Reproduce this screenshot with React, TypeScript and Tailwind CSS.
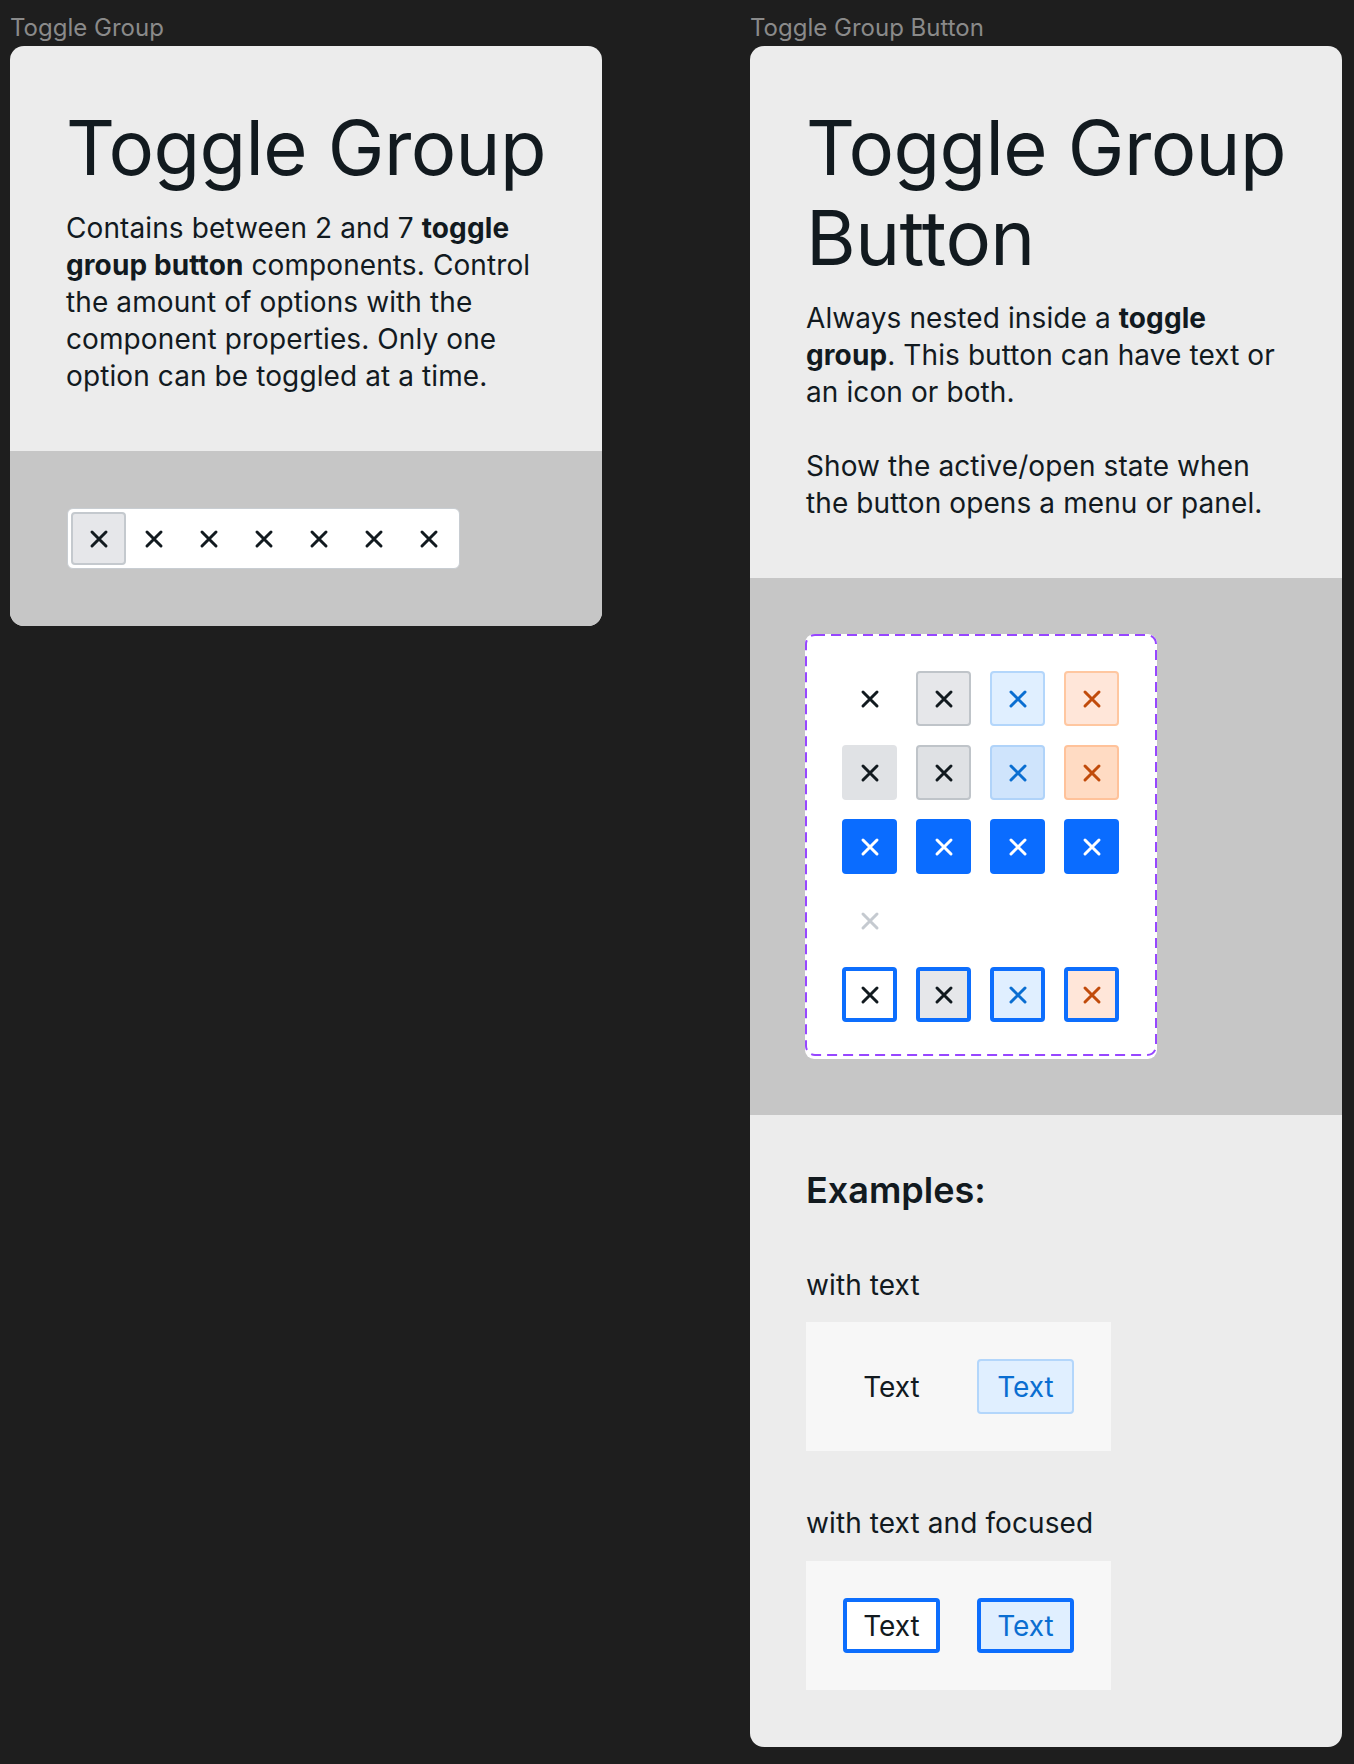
const font = { fontFamily: 'Inter, "Noto Sans", sans-serif' }

type Variant = {
  box: string
  icon: string
}

function XIcon({ className }: { className: string }) {
  return (
    <svg viewBox="0 0 20 20" className={`w-[20px] h-[20px] ${className}`} fill="none">
      <path d="M3 3 17 17M17 3 3 17" stroke="currentColor" strokeWidth="3" strokeLinecap="round" />
    </svg>
  )
}

function Tile({ v }: { v: Variant }) {
  return (
    <div className={`w-[55px] h-[55px] flex items-center justify-center rounded-[4px] ${v.box}`}>
      <XIcon className={v.icon} />
    </div>
  )
}

const rows: Variant[][] = [
  [
    { box: 'bg-white', icon: 'text-[#121a1f]' },
    { box: 'bg-[#e6e7ea] border-2 border-[#bfc4c9]', icon: 'text-[#121a1f]' },
    { box: 'bg-[#e0efff] border-2 border-[#b3d6fb]', icon: 'text-[#0a6ed1]' },
    { box: 'bg-[#ffe6d9] border-2 border-[#ffc7a0]', icon: 'text-[#c14b0b]' },
  ],
  [
    { box: 'bg-[#e0e2e5]', icon: 'text-[#121a1f]' },
    { box: 'bg-[#dfe1e4] border-2 border-[#bfc4c9]', icon: 'text-[#121a1f]' },
    { box: 'bg-[#cfe4fc] border-2 border-[#b0d3f9]', icon: 'text-[#0a6ed1]' },
    { box: 'bg-[#ffdbc3] border-2 border-[#ffc29a]', icon: 'text-[#c14b0b]' },
  ],
  [
    { box: 'bg-[#0a6cff]', icon: 'text-white' },
    { box: 'bg-[#0a6cff]', icon: 'text-white' },
    { box: 'bg-[#0a6cff]', icon: 'text-white' },
    { box: 'bg-[#0a6cff]', icon: 'text-white' },
  ],
  [{ box: 'bg-white', icon: 'text-[#c5cad0]' }],
  [
    { box: 'bg-white border-4 border-[#0d6efd]', icon: 'text-[#121a1f]' },
    { box: 'bg-[#e6e7ea] border-4 border-[#0d6efd]', icon: 'text-[#121a1f]' },
    { box: 'bg-[#e0efff] border-4 border-[#0d6efd]', icon: 'text-[#0a6ed1]' },
    { box: 'bg-[#ffe6d9] border-4 border-[#0d6efd]', icon: 'text-[#c14b0b]' },
  ],
]

function TextButton({ box, text }: { box: string; text: string }) {
  return (
    <div className={`w-[97px] h-[55px] flex items-center justify-center rounded-[4px] text-[28px] ${box}`}>
      {text}
    </div>
  )
}

export default function App() {
  return (
    <div style={font} className="min-h-[1764px] bg-[#1e1e1e] text-[#121a1f] flex gap-[148px] px-[10px] pt-[13px]">
      {/* Toggle Group */}
      <div className="w-[592px] flex flex-col">
        <div className="text-[24px] leading-[30px] text-[#8a8a8a] h-[33px]">Toggle Group</div>
        <div className="rounded-[14px] overflow-hidden bg-[#ececec]">
          <div className="p-[56px]">
            <h1 className="text-[76px] leading-[90px] tracking-[-0.6px] whitespace-nowrap">Toggle Group</h1>
            <p className="mt-[18px] text-[28px] leading-[37px] tracking-[0.1px]">
              Contains between 2 and 7 <b>toggle group button</b> components. Control the amount of options with the
              component properties. Only one option can be toggled at a time.
            </p>
          </div>
          <div className="bg-[#c6c6c6] px-[57px] py-[57px]">
            <div className="inline-flex bg-white border border-[#c8cdd2] rounded-[6px] p-[3px]">
              {Array.from({ length: 7 }).map((_, i) => (
                <div
                  key={i}
                  className={`w-[55px] h-[53px] flex items-center justify-center rounded-[4px] ${
                    i === 0 ? 'bg-[#e6e7ea] border-2 border-[#c4c9ce]' : ''
                  }`}
                >
                  <XIcon className="text-[#121a1f]" />
                </div>
              ))}
            </div>
          </div>
        </div>
      </div>

      {/* Toggle Group Button */}
      <div className="w-[592px] flex flex-col">
        <div className="text-[24px] leading-[30px] text-[#8a8a8a] h-[33px]">Toggle Group Button</div>
        <div className="rounded-[14px] overflow-hidden bg-[#ececec]">
          <div className="p-[56px]">
            <h1 className="text-[76px] leading-[90px] tracking-[-0.6px]">Toggle Group Button</h1>
            <p className="mt-[18px] text-[28px] leading-[37px] tracking-[0.1px]">
              Always nested inside a <b>toggle group</b>. This button can have text or an icon or both.
            </p>
            <p className="mt-[37px] text-[28px] leading-[37px] tracking-[0.1px]">
              Show the active/open state when the button opens a menu or panel.
            </p>
          </div>
          <div className="bg-[#c6c6c6] px-[55px] py-[56px]">
            <div className="relative w-[352px] bg-white rounded-[9px] p-[37px] flex flex-col gap-[19px]">
              <svg className="absolute inset-0 w-full h-full pointer-events-none" fill="none">
                <rect
                  x="1"
                  y="1"
                  width="350"
                  height="420"
                  rx="9"
                  stroke="#9747ff"
                  strokeWidth="2"
                  strokeDasharray="10 6"
                />
              </svg>
              {rows.map((row, r) => (
                <div key={r} className="flex gap-[19px]">
                  {row.map((v, c) => (
                    <Tile key={c} v={v} />
                  ))}
                </div>
              ))}
            </div>
          </div>
          <div className="px-[56px] pt-[51px] pb-[57px]">
            <h2 className="text-[36px] leading-[48px] font-semibold">Examples:</h2>
            <div className="mt-[53px] text-[28px] leading-[37px] tracking-[0.1px]">with text</div>
            <div className="mt-[18px] w-[305px] bg-[#f7f7f7] p-[37px] flex gap-[37px]">
              <TextButton box="bg-[#f7f7f7]" text="Text" />
              <TextButton box="bg-[#e0efff] border-2 border-[#b3d6fb] text-[#0a6ed1]" text="Text" />
            </div>
            <div className="mt-[54px] text-[28px] leading-[37px] tracking-[0.1px]">with text and focused</div>
            <div className="mt-[19px] w-[305px] bg-[#f7f7f7] p-[37px] flex gap-[37px]">
              <TextButton box="bg-white border-4 border-[#0d6efd]" text="Text" />
              <TextButton box="bg-[#e0efff] border-4 border-[#0d6efd] text-[#0a6ed1]" text="Text" />
            </div>
          </div>
        </div>
      </div>
    </div>
  )
}
